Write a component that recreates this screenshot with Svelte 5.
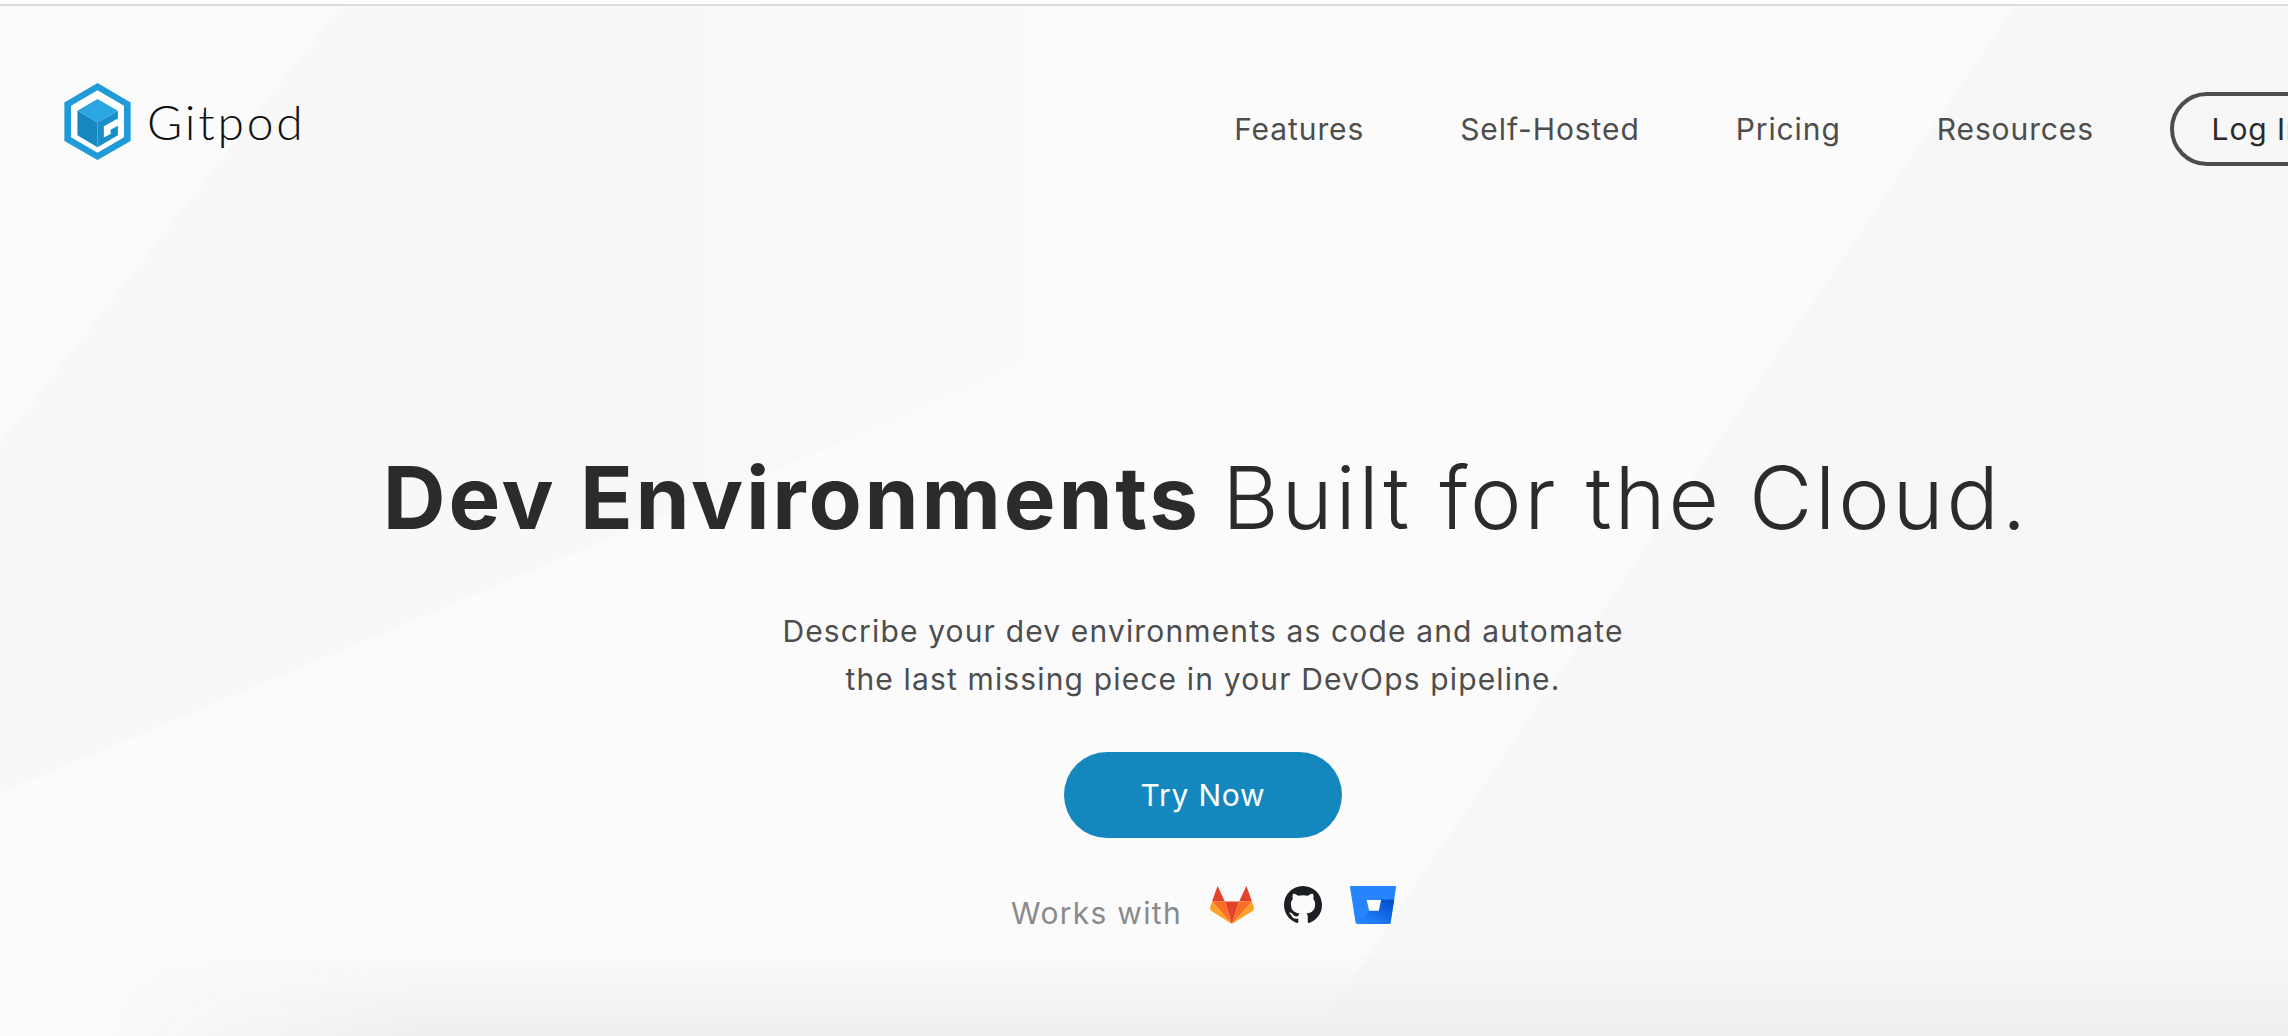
<script>
  const nav = ['Features', 'Self-Hosted', 'Pricing', 'Resources'];
</script>

<div class="page">
  <svg class="facets" viewBox="0 0 2288 1036" aria-hidden="true">
    <defs>
      <linearGradient id="fadeLeft" gradientUnits="userSpaceOnUse" x1="700" y1="0" x2="1150" y2="0">
        <stop offset="0" stop-color="#f8f8f8" />
        <stop offset="1" stop-color="#fbfbfb" />
      </linearGradient>
      <linearGradient id="bottomShade" x1="0" y1="0" x2="0" y2="1">
        <stop offset="0" stop-color="#efefef" stop-opacity="0" />
        <stop offset="1" stop-color="#eeeeee" />
      </linearGradient>
      <linearGradient id="shadeEdge" gradientUnits="userSpaceOnUse" x1="100" y1="0" x2="420" y2="0">
        <stop offset="0" stop-color="#000" />
        <stop offset="1" stop-color="#fff" />
      </linearGradient>
      <mask id="shadeMask" maskUnits="userSpaceOnUse" x="0" y="0" width="2288" height="1036">
        <rect width="2288" height="1036" fill="url(#shadeEdge)" />
      </mask>
    </defs>
    <rect y="6" width="2288" height="1030" fill="#fbfbfb" />
    <polygon points="340,6 1180,6 1180,300 0,793 0,443" fill="url(#fadeLeft)" />
    <polygon points="2015,6 2288,6 2288,1036 1313,1036" fill="#f7f7f7" />
    <rect y="950" width="2288" height="86" fill="url(#bottomShade)" mask="url(#shadeMask)" />
  </svg>

  <div class="rule"></div>

  <div class="content">
    <header>
      <div class="brand">
        <svg class="logo" viewBox="72 70 198 230" aria-hidden="true">
          <polygon points="171,70 270,128 270,243 171,300 72,243 72,128" fill="#1f9bd8" />
          <polygon points="171,92 250,138 250,232 171,278 92,232 92,138" fill="#fff" />
          <polygon points="171,118 232,153 171,188 111,153" fill="#2ba6e3" />
          <polygon points="111,153 171,188 171,262 111,226" fill="#1787c0" />
          <polygon points="171,188 232,153 232,226 171,262" fill="#1a8ec9" />
          <polygon points="190,199 232,176 232,198 210,210 210,222 190,233" fill="#fff" />
        </svg>
        <span class="name">Gitpod</span>
      </div>
      <nav>
        {#each nav as item}
          <a href="#top">{item}</a>
        {/each}
        <a class="login" href="#top">Log In</a>
      </nav>
    </header>

    <main>
      <h1><strong>Dev Environments</strong> Built for the Cloud.</h1>
      <p class="lead">Describe your dev environments as code and automate<br />the last missing piece in your DevOps pipeline.</p>
      <a class="cta" href="#top">Try Now</a>
      <div class="works">
        <span>Works with</span>
        <svg class="gitlab" viewBox="0 0 133 115" aria-label="GitLab">
          <polygon points="45,47 88,47 66,115" fill="#e24329" />
          <polygon points="23,0 45,47 6,47" fill="#e24329" />
          <polygon points="110,0 88,47 127,47" fill="#e24329" />
          <polygon points="6,47 45,47 66,115" fill="#fc6d26" />
          <polygon points="127,47 88,47 66,115" fill="#fc6d26" />
          <polygon points="6,47 0,66 2,74 66,115" fill="#fca326" />
          <polygon points="127,47 133,66 131,74 66,115" fill="#fca326" />
        </svg>
        <svg class="github" viewBox="0 0 16 16" aria-label="GitHub">
          <path fill="#1b1f23" fill-rule="evenodd" d="M8 0C3.58 0 0 3.58 0 8c0 3.54 2.29 6.53 5.47 7.59.4.07.55-.17.55-.38 0-.19-.01-.82-.01-1.49-2.01.37-2.53-.49-2.69-.94-.09-.23-.48-.94-.82-1.13-.28-.15-.68-.52-.01-.53.63-.01 1.08.58 1.23.82.72 1.21 1.87.87 2.33.66.07-.52.28-.87.51-1.07-1.78-.2-3.64-.89-3.64-3.95 0-.87.31-1.59.82-2.15-.08-.2-.36-1.02.08-2.12 0 0 .67-.21 2.2.82.64-.18 1.32-.27 2-.27.68 0 1.36.09 2 .27 1.53-1.04 2.2-.82 2.2-.82.44 1.1.16 1.92.08 2.12.51.56.82 1.27.82 2.15 0 3.07-1.87 3.75-3.65 3.95.29.25.54.73.54 1.48 0 1.07-.01 1.93-.01 2.2 0 .21.15.46.55.38A8.013 8.013 0 0016 8c0-4.42-3.58-8-8-8z" />
        </svg>
        <svg class="bitbucket" viewBox="0 0 46 38" aria-label="Bitbucket">
          <defs>
            <linearGradient id="bbShade" x1="1" y1="0" x2="0.25" y2="1">
              <stop offset="0.1" stop-color="#0052cc" />
              <stop offset="1" stop-color="#2684ff" />
            </linearGradient>
          </defs>
          <path d="M1 0H45a1 1 0 0 1 1 1.2L40.6 36.6a1.6 1.6 0 0 1-1.6 1.4H7.2a1.6 1.6 0 0 1-1.6-1.4L0 1.2A1 1 0 0 1 1 0Z" fill="#2684ff" />
          <path d="M44.2 13.6H31L28.8 24.8H19.4L8 38H39a1.6 1.6 0 0 0 1.6-1.4Z" fill="url(#bbShade)" />
          <polygon points="16.7,14 31,14 28.8,24.8 19.2,24.8" fill="#fff" />
        </svg>
      </div>
    </main>
  </div>
</div>

<style>
  :global(body) {
    margin: 0;
    background: #fff;
  }

  .page {
    position: relative;
    width: 2288px;
    height: 1036px;
    overflow: hidden;
    font-family: Inter, "Open Sans", sans-serif;
    color: #4d4d4d;
  }

  .facets {
    position: absolute;
    inset: 0;
    width: 100%;
    height: 100%;
  }

  .rule {
    position: relative;
    height: 2px;
    margin-top: 4px;
    background: #dcdce0;
  }

  .content {
    position: relative;
    width: 2406px;
  }

  header {
    height: 246px;
    display: flex;
    align-items: center;
    justify-content: space-between;
    padding: 0 60px 0 64px;
    box-sizing: border-box;
  }

  .brand {
    display: flex;
    align-items: center;
    gap: 16px;
    margin-top: -15px;
  }

  .logo {
    width: 67px;
    height: 77px;
  }

  .name {
    font-family: Lato, sans-serif;
    font-weight: 300;
    font-size: 48px;
    letter-spacing: 2.8px;
    color: #111;
  }

  nav {
    display: flex;
    align-items: center;
    font-size: 30px;
    letter-spacing: 0.9px;
  }

  nav a {
    color: #4d4d4d;
    text-decoration: none;
    margin-right: 96px;
  }

  nav a:nth-last-child(2) {
    margin-right: 76px;
  }

  nav .login {
    margin: 0;
    width: 176px;
    height: 74px;
    box-sizing: border-box;
    border: 4px solid #4d4d4d;
    border-radius: 37px;
    display: flex;
    align-items: center;
    justify-content: center;
    color: #2a2a2a;
    white-space: nowrap;
  }

  main {
    display: flex;
    flex-direction: column;
    align-items: center;
    margin-top: 202px;
  }

  h1 {
    margin: 0;
    padding-left: 6px;
    font-size: 87px;
    line-height: 1;
    font-weight: 300;
    letter-spacing: 2.8px;
    color: #2b2b2b;
  }

  h1 strong {
    font-weight: 700;
    margin-right: -6px;
  }

  .lead {
    margin: 66px 0 0;
    font-size: 30px;
    line-height: 48px;
    letter-spacing: 1.15px;
    text-align: center;
  }

  .cta {
    margin-top: 49px;
    width: 278px;
    height: 86px;
    border-radius: 43px;
    background: #1487bf;
    color: #fff;
    font-size: 30px;
    letter-spacing: 0.8px;
    display: flex;
    align-items: center;
    justify-content: center;
    text-decoration: none;
  }

  .works {
    margin-top: 48px;
    display: flex;
    align-items: flex-start;
    color: #8a8a8a;
    font-size: 30px;
    letter-spacing: 1.3px;
    padding-left: 1px;
  }

  .works span {
    line-height: 36px;
    margin-top: 9px;
  }

  .gitlab { width: 44px; height: 38px; margin-left: 28px; }
  .github { width: 38px; height: 38px; margin-left: 30px; }
  .bitbucket { width: 46px; height: 38px; margin-left: 28px; }
</style>
